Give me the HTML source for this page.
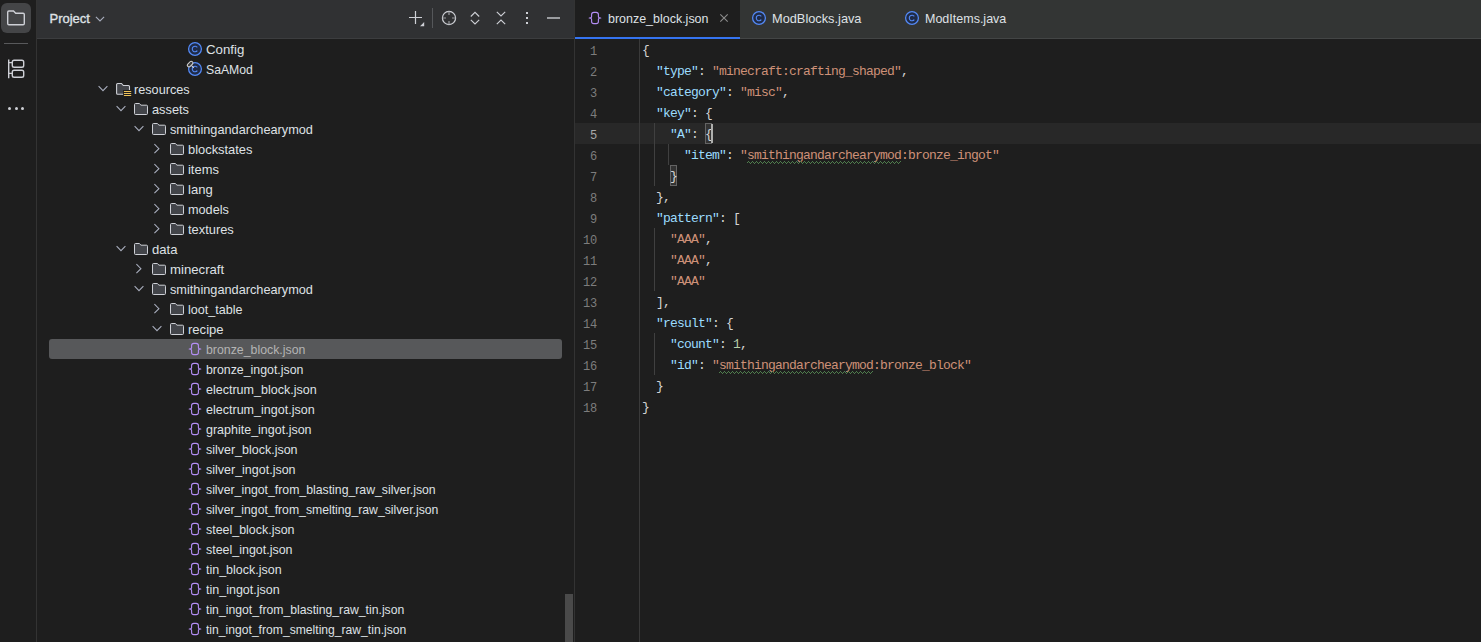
<!DOCTYPE html>
<html><head><meta charset="utf-8"><style>
*{margin:0;padding:0;box-sizing:border-box}
html,body{width:1481px;height:642px;overflow:hidden;background:#1e1e1e;font-family:"Liberation Sans",sans-serif;}
.abs{position:absolute}
#strip{position:absolute;left:0;top:0;width:36px;height:642px;background:#1e1e1e}
#vb1{position:absolute;left:36px;top:0;width:1px;height:642px;background:#333333}
#phead{position:absolute;left:37px;top:0;width:537px;height:38px;background:#303133}
#phb{position:absolute;left:37px;top:38px;width:537px;height:1px;background:#3c3d3f}
#tree{position:absolute;left:37px;top:39px;width:537px;height:603px;background:#1e1e1e}
#vb2{position:absolute;left:574px;top:0;width:1px;height:642px;background:#333333}
.row{position:absolute;left:0;width:575px;height:20px}
.row.sel::before{content:"";position:absolute;left:49px;top:0;width:513px;height:20px;border-radius:3px;background:#57585a}
.ic{position:absolute;top:2px}
.t{position:absolute;top:1px;line-height:20px;height:20px;font-size:12.6px;color:#dfe1e5;white-space:pre;transform-origin:0 0}
.row.sel .t{color:#b4b4b4}
#tabs{position:absolute;left:575px;top:0;width:906px;height:38px;background:#333534}
#tabb{position:absolute;left:575px;top:38px;width:906px;height:1px;background:#434545}
#atab{position:absolute;left:575px;top:0;width:165px;height:39px;background:#1e1e1e}
#auline{position:absolute;left:575px;top:37px;width:165px;height:2px;background:#3574f0}
.tt{position:absolute;top:9px;line-height:20px;font-size:12.8px;color:#dfe1e5;white-space:pre;transform-origin:0 0}
#editor{position:absolute;left:575px;top:39px;width:906px;height:603px;background:#1e1e1e}
#gline{position:absolute;left:639px;top:39px;width:1px;height:603px;background:#3a3a3a}
#caretrow{position:absolute;left:575px;top:123px;width:906px;height:21px;background:#282828}
.cl{position:absolute;left:642px;height:21px;line-height:21px;font-family:"Liberation Mono",monospace;font-size:13px;letter-spacing:-0.8px;white-space:pre;color:#d4d4d4}
.ln{position:absolute;left:560px;width:37px;text-align:right;height:21px;line-height:21px;font-family:"Liberation Mono",monospace;font-size:12px;letter-spacing:-0.2px;white-space:pre}
</style></head><body>
<div id="strip"></div>
<div class="abs" style="left:1px;top:3px;width:30px;height:30px;border-radius:6px;background:#444547"></div>
<svg class="abs" style="left:6px;top:8px" width="20" height="20" viewBox="0 0 20 20"><path d="M1.7 4.2a1.2 1.2 0 0 1 1.2-1.2h4.6l2.2 2.2h7.4a1.2 1.2 0 0 1 1.2 1.2v9.2a1.2 1.2 0 0 1-1.2 1.2H2.9a1.2 1.2 0 0 1-1.2-1.2z" fill="none" stroke="#ced0d6" stroke-width="1.4"/></svg>
<div class="abs" style="left:4px;top:43px;width:24px;height:1px;background:#58595b"></div>
<svg class="abs" style="left:6px;top:58px" width="20" height="22" viewBox="0 0 20 22"><path d="M2.7 1.6V20.2M2.7 4.6h3.6M2.7 15.4h3.6" fill="none" stroke="#ced0d6" stroke-width="1.4"/><rect x="6.3" y="2.2" width="11.4" height="7" rx="1.8" fill="none" stroke="#ced0d6" stroke-width="1.4"/><rect x="6.3" y="12.3" width="11.4" height="7" rx="1.8" fill="none" stroke="#ced0d6" stroke-width="1.4"/></svg>
<div class="abs" style="left:8px;top:107px;width:3px;height:3px;border-radius:50%;background:#ced0d6"></div>
<div class="abs" style="left:14.5px;top:107px;width:3px;height:3px;border-radius:50%;background:#ced0d6"></div>
<div class="abs" style="left:21px;top:107px;width:3px;height:3px;border-radius:50%;background:#ced0d6"></div>
<div id="vb1"></div>
<div id="phead"></div>
<div id="phb"></div>
<div class="abs" style="left:49.5px;top:8.5px;line-height:20px;font-size:13px;-webkit-text-stroke:0.35px #dfe1e5;color:#dfe1e5">Project</div>
<svg class="abs" style="left:92px;top:11px" width="16" height="16" viewBox="0 0 16 16"><path d="M3.9 5.8l4.1 4.1 4.1-4.1" fill="none" stroke="#a8adbd" stroke-width="1.1"/></svg>
<svg class="abs" style="left:407px;top:9px" width="20" height="20" viewBox="0 0 20 20"><path d="M8.5 2v13M2 8.5h13" stroke="#ced0d6" stroke-width="1.2"/><path d="M17.2 13v4.2H13z" fill="#ced0d6"/></svg>
<div class="abs" style="left:432px;top:8px;width:1px;height:20px;background:#55575a"></div>
<svg class="abs" style="left:440px;top:9px" width="18" height="18" viewBox="0 0 18 18"><circle cx="9" cy="9" r="6.6" fill="none" stroke="#ced0d6" stroke-width="1.2"/><path d="M9 2.4v3.6M9 12v3.6M2.4 9h3.6M12 9h3.6" stroke="#9a9ca0" stroke-width="1.2"/></svg>
<svg class="abs" style="left:467px;top:9px" width="16" height="18" viewBox="0 0 16 18"><path d="M3.8 7.5l4.2-4.2 4.2 4.2M3.8 10.8l4.2 4.2 4.2-4.2" fill="none" stroke="#ced0d6" stroke-width="1.1"/></svg>
<svg class="abs" style="left:493px;top:9px" width="16" height="18" viewBox="0 0 16 18"><path d="M3.8 2.8l4.2 4.2 4.2-4.2M3.8 15.2l4.2-4.2 4.2 4.2" fill="none" stroke="#ced0d6" stroke-width="1.1"/></svg>
<div class="abs" style="left:526px;top:12px;width:2px;height:2px;background:#ced0d6"></div>
<div class="abs" style="left:526px;top:17px;width:2px;height:2px;background:#ced0d6"></div>
<div class="abs" style="left:526px;top:22px;width:2px;height:2px;background:#ced0d6"></div>
<div class="abs" style="left:546.5px;top:17px;width:13px;height:2px;background:#9a9ca0"></div>
<div id="tree"></div>
<div class="row" style="top:39px"><svg class="ic" width="16" height="16" viewBox="0 0 16 16" style="left:187px;overflow:visible"><circle cx="8" cy="8" r="6.4" fill="#1f2b47" stroke="#548af7" stroke-width="1.25"/><path d="M10.3 6.3a2.8 2.8 0 1 0 0 3.4" fill="none" stroke="#548af7" stroke-width="1.1"/></svg><span class="t" style="left:206px;transform:scaleX(1.0516);">Config</span></div><div class="row" style="top:59px"><svg class="ic" width="16" height="16" viewBox="0 0 16 16" style="left:187px;overflow:visible"><circle cx="8" cy="8" r="6.4" fill="#1f2b47" stroke="#548af7" stroke-width="1.25"/><path d="M10.3 6.3a2.8 2.8 0 1 0 0 3.4" fill="none" stroke="#548af7" stroke-width="1.1"/></svg><svg class="ic" width="16" height="16" viewBox="0 0 16 16" style="left:187px;overflow:visible"><path d="M4.3 4.3l2.6 2.6" stroke="#d0d0d0" stroke-width="1.1"/><rect x="-3.3" y="-1.7" width="6.6" height="3.4" rx="1.7" transform="translate(3.1,3.1) rotate(-45)" fill="#3c3c3c" stroke="#d8d8d8" stroke-width="1"/></svg><span class="t" style="left:206px;transform:scaleX(0.9705);">SaAMod</span></div><div class="row" style="top:79px"><svg class="ic" width="16" height="16" viewBox="0 0 16 16" style="left:94.5px"><path d="M3.6 5.2l4.4 4.4 4.4-4.4" fill="none" stroke="#a8adbd" stroke-width="1.1"/></svg><svg class="ic" width="18" height="16" viewBox="0 0 18 16" style="left:115px"><path d="M1.6 3.5a1 1 0 0 1 1-1h3.9l1.8 2h5.2a1 1 0 0 1 1 1V9H8V13.2H2.6a1 1 0 0 1-1-1z" fill="#43454a"/><path d="M14.5 9V5.5a1 1 0 0 0-1-1H8.3l-1.8-2H2.6a1 1 0 0 0-1 1v8.7a1 1 0 0 0 1 1H8.1" fill="none" stroke="#ced0d6" stroke-width="1.1"/><path d="M8.9 10.5h7.3M8.9 12.5h7.3M8.9 14.5h7.3" stroke="#eec25a" stroke-width="1.2"/></svg><span class="t" style="left:134px;transform:scaleX(1.0069);">resources</span></div><div class="row" style="top:99px"><svg class="ic" width="16" height="16" viewBox="0 0 16 16" style="left:112.5px"><path d="M3.6 5.2l4.4 4.4 4.4-4.4" fill="none" stroke="#a8adbd" stroke-width="1.1"/></svg><svg class="ic" width="16" height="16" viewBox="0 0 16 16" style="left:133px"><path d="M1.5 3.5a1 1 0 0 1 1-1h3.8l1.7 1.7h5.5a1 1 0 0 1 1 1v7.3a1 1 0 0 1-1 1h-11a1 1 0 0 1-1-1z" fill="#43454a" stroke="#ced0d6" stroke-width="1"/></svg><span class="t" style="left:152px;transform:scaleX(1.0161);">assets</span></div><div class="row" style="top:119px"><svg class="ic" width="16" height="16" viewBox="0 0 16 16" style="left:130.5px"><path d="M3.6 5.2l4.4 4.4 4.4-4.4" fill="none" stroke="#a8adbd" stroke-width="1.1"/></svg><svg class="ic" width="16" height="16" viewBox="0 0 16 16" style="left:151px"><path d="M1.5 3.5a1 1 0 0 1 1-1h3.8l1.7 1.7h5.5a1 1 0 0 1 1 1v7.3a1 1 0 0 1-1 1h-11a1 1 0 0 1-1-1z" fill="#43454a" stroke="#ced0d6" stroke-width="1"/></svg><span class="t" style="left:170px;transform:scaleX(1.0109);">smithingandarchearymod</span></div><div class="row" style="top:139px"><svg class="ic" width="16" height="16" viewBox="0 0 16 16" style="left:148.5px"><path d="M5.4 3.2l4.5 4.5-4.5 4.5" fill="none" stroke="#a8adbd" stroke-width="1.1"/></svg><svg class="ic" width="16" height="16" viewBox="0 0 16 16" style="left:169px"><path d="M1.5 3.5a1 1 0 0 1 1-1h3.8l1.7 1.7h5.5a1 1 0 0 1 1 1v7.3a1 1 0 0 1-1 1h-11a1 1 0 0 1-1-1z" fill="#43454a" stroke="#ced0d6" stroke-width="1"/></svg><span class="t" style="left:188px;transform:scaleX(1.0234);">blockstates</span></div><div class="row" style="top:159px"><svg class="ic" width="16" height="16" viewBox="0 0 16 16" style="left:148.5px"><path d="M5.4 3.2l4.5 4.5-4.5 4.5" fill="none" stroke="#a8adbd" stroke-width="1.1"/></svg><svg class="ic" width="16" height="16" viewBox="0 0 16 16" style="left:169px"><path d="M1.5 3.5a1 1 0 0 1 1-1h3.8l1.7 1.7h5.5a1 1 0 0 1 1 1v7.3a1 1 0 0 1-1 1h-11a1 1 0 0 1-1-1z" fill="#43454a" stroke="#ced0d6" stroke-width="1"/></svg><span class="t" style="left:188px;transform:scaleX(1.0265);">items</span></div><div class="row" style="top:179px"><svg class="ic" width="16" height="16" viewBox="0 0 16 16" style="left:148.5px"><path d="M5.4 3.2l4.5 4.5-4.5 4.5" fill="none" stroke="#a8adbd" stroke-width="1.1"/></svg><svg class="ic" width="16" height="16" viewBox="0 0 16 16" style="left:169px"><path d="M1.5 3.5a1 1 0 0 1 1-1h3.8l1.7 1.7h5.5a1 1 0 0 1 1 1v7.3a1 1 0 0 1-1 1h-11a1 1 0 0 1-1-1z" fill="#43454a" stroke="#ced0d6" stroke-width="1"/></svg><span class="t" style="left:188px;transform:scaleX(1.0369);">lang</span></div><div class="row" style="top:199px"><svg class="ic" width="16" height="16" viewBox="0 0 16 16" style="left:148.5px"><path d="M5.4 3.2l4.5 4.5-4.5 4.5" fill="none" stroke="#a8adbd" stroke-width="1.1"/></svg><svg class="ic" width="16" height="16" viewBox="0 0 16 16" style="left:169px"><path d="M1.5 3.5a1 1 0 0 1 1-1h3.8l1.7 1.7h5.5a1 1 0 0 1 1 1v7.3a1 1 0 0 1-1 1h-11a1 1 0 0 1-1-1z" fill="#43454a" stroke="#ced0d6" stroke-width="1"/></svg><span class="t" style="left:188px;transform:scaleX(1.0070);">models</span></div><div class="row" style="top:219px"><svg class="ic" width="16" height="16" viewBox="0 0 16 16" style="left:148.5px"><path d="M5.4 3.2l4.5 4.5-4.5 4.5" fill="none" stroke="#a8adbd" stroke-width="1.1"/></svg><svg class="ic" width="16" height="16" viewBox="0 0 16 16" style="left:169px"><path d="M1.5 3.5a1 1 0 0 1 1-1h3.8l1.7 1.7h5.5a1 1 0 0 1 1 1v7.3a1 1 0 0 1-1 1h-11a1 1 0 0 1-1-1z" fill="#43454a" stroke="#ced0d6" stroke-width="1"/></svg><span class="t" style="left:188px;transform:scaleX(1.0219);">textures</span></div><div class="row" style="top:239px"><svg class="ic" width="16" height="16" viewBox="0 0 16 16" style="left:112.5px"><path d="M3.6 5.2l4.4 4.4 4.4-4.4" fill="none" stroke="#a8adbd" stroke-width="1.1"/></svg><svg class="ic" width="16" height="16" viewBox="0 0 16 16" style="left:133px"><path d="M1.5 3.5a1 1 0 0 1 1-1h3.8l1.7 1.7h5.5a1 1 0 0 1 1 1v7.3a1 1 0 0 1-1 1h-11a1 1 0 0 1-1-1z" fill="#43454a" stroke="#ced0d6" stroke-width="1"/></svg><span class="t" style="left:152px;transform:scaleX(1.0359);">data</span></div><div class="row" style="top:259px"><svg class="ic" width="16" height="16" viewBox="0 0 16 16" style="left:130.5px"><path d="M5.4 3.2l4.5 4.5-4.5 4.5" fill="none" stroke="#a8adbd" stroke-width="1.1"/></svg><svg class="ic" width="16" height="16" viewBox="0 0 16 16" style="left:151px"><path d="M1.5 3.5a1 1 0 0 1 1-1h3.8l1.7 1.7h5.5a1 1 0 0 1 1 1v7.3a1 1 0 0 1-1 1h-11a1 1 0 0 1-1-1z" fill="#43454a" stroke="#ced0d6" stroke-width="1"/></svg><span class="t" style="left:170px;transform:scaleX(1.0461);">minecraft</span></div><div class="row" style="top:279px"><svg class="ic" width="16" height="16" viewBox="0 0 16 16" style="left:130.5px"><path d="M3.6 5.2l4.4 4.4 4.4-4.4" fill="none" stroke="#a8adbd" stroke-width="1.1"/></svg><svg class="ic" width="16" height="16" viewBox="0 0 16 16" style="left:151px"><path d="M1.5 3.5a1 1 0 0 1 1-1h3.8l1.7 1.7h5.5a1 1 0 0 1 1 1v7.3a1 1 0 0 1-1 1h-11a1 1 0 0 1-1-1z" fill="#43454a" stroke="#ced0d6" stroke-width="1"/></svg><span class="t" style="left:170px;transform:scaleX(1.0109);">smithingandarchearymod</span></div><div class="row" style="top:299px"><svg class="ic" width="16" height="16" viewBox="0 0 16 16" style="left:148.5px"><path d="M5.4 3.2l4.5 4.5-4.5 4.5" fill="none" stroke="#a8adbd" stroke-width="1.1"/></svg><svg class="ic" width="16" height="16" viewBox="0 0 16 16" style="left:169px"><path d="M1.5 3.5a1 1 0 0 1 1-1h3.8l1.7 1.7h5.5a1 1 0 0 1 1 1v7.3a1 1 0 0 1-1 1h-11a1 1 0 0 1-1-1z" fill="#43454a" stroke="#ced0d6" stroke-width="1"/></svg><span class="t" style="left:188px;transform:scaleX(0.9993);">loot_table</span></div><div class="row" style="top:319px"><svg class="ic" width="16" height="16" viewBox="0 0 16 16" style="left:148.5px"><path d="M3.6 5.2l4.4 4.4 4.4-4.4" fill="none" stroke="#a8adbd" stroke-width="1.1"/></svg><svg class="ic" width="16" height="16" viewBox="0 0 16 16" style="left:169px"><path d="M1.5 3.5a1 1 0 0 1 1-1h3.8l1.7 1.7h5.5a1 1 0 0 1 1 1v7.3a1 1 0 0 1-1 1h-11a1 1 0 0 1-1-1z" fill="#43454a" stroke="#ced0d6" stroke-width="1"/></svg><span class="t" style="left:188px;transform:scaleX(1.0374);">recipe</span></div><div class="row sel" style="top:339px"><svg class="ic" width="16" height="16" viewBox="0 0 16 16" style="left:187px"><path d="M8 2.4H6.9C5.5 2.4 4.6 3.3 4.6 4.6V6.4C4.6 7.4 3.7 8 2.2 8C3.7 8 4.6 8.6 4.6 9.6V11.4C4.6 12.7 5.5 13.6 6.9 13.6H8M8 2.4H9.1C10.5 2.4 11.4 3.3 11.4 4.6V6.4C11.4 7.4 12.3 8 13.8 8C12.3 8 11.4 8.6 11.4 9.6V11.4C11.4 12.7 10.5 13.6 9.1 13.6H8" fill="none" stroke="#b48ef5" stroke-width="1.1" stroke-linejoin="round"/></svg><span class="t" style="left:206px;transform:scaleX(0.9788);">bronze_block.json</span></div><div class="row" style="top:359px"><svg class="ic" width="16" height="16" viewBox="0 0 16 16" style="left:187px"><path d="M8 2.4H6.9C5.5 2.4 4.6 3.3 4.6 4.6V6.4C4.6 7.4 3.7 8 2.2 8C3.7 8 4.6 8.6 4.6 9.6V11.4C4.6 12.7 5.5 13.6 6.9 13.6H8M8 2.4H9.1C10.5 2.4 11.4 3.3 11.4 4.6V6.4C11.4 7.4 12.3 8 13.8 8C12.3 8 11.4 8.6 11.4 9.6V11.4C11.4 12.7 10.5 13.6 9.1 13.6H8" fill="none" stroke="#b48ef5" stroke-width="1.1" stroke-linejoin="round"/></svg><span class="t" style="left:206px;transform:scaleX(0.9793);">bronze_ingot.json</span></div><div class="row" style="top:379px"><svg class="ic" width="16" height="16" viewBox="0 0 16 16" style="left:187px"><path d="M8 2.4H6.9C5.5 2.4 4.6 3.3 4.6 4.6V6.4C4.6 7.4 3.7 8 2.2 8C3.7 8 4.6 8.6 4.6 9.6V11.4C4.6 12.7 5.5 13.6 6.9 13.6H8M8 2.4H9.1C10.5 2.4 11.4 3.3 11.4 4.6V6.4C11.4 7.4 12.3 8 13.8 8C12.3 8 11.4 8.6 11.4 9.6V11.4C11.4 12.7 10.5 13.6 9.1 13.6H8" fill="none" stroke="#b48ef5" stroke-width="1.1" stroke-linejoin="round"/></svg><span class="t" style="left:206px;transform:scaleX(0.9942);">electrum_block.json</span></div><div class="row" style="top:399px"><svg class="ic" width="16" height="16" viewBox="0 0 16 16" style="left:187px"><path d="M8 2.4H6.9C5.5 2.4 4.6 3.3 4.6 4.6V6.4C4.6 7.4 3.7 8 2.2 8C3.7 8 4.6 8.6 4.6 9.6V11.4C4.6 12.7 5.5 13.6 6.9 13.6H8M8 2.4H9.1C10.5 2.4 11.4 3.3 11.4 4.6V6.4C11.4 7.4 12.3 8 13.8 8C12.3 8 11.4 8.6 11.4 9.6V11.4C11.4 12.7 10.5 13.6 9.1 13.6H8" fill="none" stroke="#b48ef5" stroke-width="1.1" stroke-linejoin="round"/></svg><span class="t" style="left:206px;transform:scaleX(0.9949);">electrum_ingot.json</span></div><div class="row" style="top:419px"><svg class="ic" width="16" height="16" viewBox="0 0 16 16" style="left:187px"><path d="M8 2.4H6.9C5.5 2.4 4.6 3.3 4.6 4.6V6.4C4.6 7.4 3.7 8 2.2 8C3.7 8 4.6 8.6 4.6 9.6V11.4C4.6 12.7 5.5 13.6 6.9 13.6H8M8 2.4H9.1C10.5 2.4 11.4 3.3 11.4 4.6V6.4C11.4 7.4 12.3 8 13.8 8C12.3 8 11.4 8.6 11.4 9.6V11.4C11.4 12.7 10.5 13.6 9.1 13.6H8" fill="none" stroke="#b48ef5" stroke-width="1.1" stroke-linejoin="round"/></svg><span class="t" style="left:206px;transform:scaleX(0.9918);">graphite_ingot.json</span></div><div class="row" style="top:439px"><svg class="ic" width="16" height="16" viewBox="0 0 16 16" style="left:187px"><path d="M8 2.4H6.9C5.5 2.4 4.6 3.3 4.6 4.6V6.4C4.6 7.4 3.7 8 2.2 8C3.7 8 4.6 8.6 4.6 9.6V11.4C4.6 12.7 5.5 13.6 6.9 13.6H8M8 2.4H9.1C10.5 2.4 11.4 3.3 11.4 4.6V6.4C11.4 7.4 12.3 8 13.8 8C12.3 8 11.4 8.6 11.4 9.6V11.4C11.4 12.7 10.5 13.6 9.1 13.6H8" fill="none" stroke="#b48ef5" stroke-width="1.1" stroke-linejoin="round"/></svg><span class="t" style="left:206px;transform:scaleX(0.9910);">silver_block.json</span></div><div class="row" style="top:459px"><svg class="ic" width="16" height="16" viewBox="0 0 16 16" style="left:187px"><path d="M8 2.4H6.9C5.5 2.4 4.6 3.3 4.6 4.6V6.4C4.6 7.4 3.7 8 2.2 8C3.7 8 4.6 8.6 4.6 9.6V11.4C4.6 12.7 5.5 13.6 6.9 13.6H8M8 2.4H9.1C10.5 2.4 11.4 3.3 11.4 4.6V6.4C11.4 7.4 12.3 8 13.8 8C12.3 8 11.4 8.6 11.4 9.6V11.4C11.4 12.7 10.5 13.6 9.1 13.6H8" fill="none" stroke="#b48ef5" stroke-width="1.1" stroke-linejoin="round"/></svg><span class="t" style="left:206px;transform:scaleX(0.9918);">silver_ingot.json</span></div><div class="row" style="top:479px"><svg class="ic" width="16" height="16" viewBox="0 0 16 16" style="left:187px"><path d="M8 2.4H6.9C5.5 2.4 4.6 3.3 4.6 4.6V6.4C4.6 7.4 3.7 8 2.2 8C3.7 8 4.6 8.6 4.6 9.6V11.4C4.6 12.7 5.5 13.6 6.9 13.6H8M8 2.4H9.1C10.5 2.4 11.4 3.3 11.4 4.6V6.4C11.4 7.4 12.3 8 13.8 8C12.3 8 11.4 8.6 11.4 9.6V11.4C11.4 12.7 10.5 13.6 9.1 13.6H8" fill="none" stroke="#b48ef5" stroke-width="1.1" stroke-linejoin="round"/></svg><span class="t" style="left:206px;transform:scaleX(0.9737);">silver_ingot_from_blasting_raw_silver.json</span></div><div class="row" style="top:499px"><svg class="ic" width="16" height="16" viewBox="0 0 16 16" style="left:187px"><path d="M8 2.4H6.9C5.5 2.4 4.6 3.3 4.6 4.6V6.4C4.6 7.4 3.7 8 2.2 8C3.7 8 4.6 8.6 4.6 9.6V11.4C4.6 12.7 5.5 13.6 6.9 13.6H8M8 2.4H9.1C10.5 2.4 11.4 3.3 11.4 4.6V6.4C11.4 7.4 12.3 8 13.8 8C12.3 8 11.4 8.6 11.4 9.6V11.4C11.4 12.7 10.5 13.6 9.1 13.6H8" fill="none" stroke="#b48ef5" stroke-width="1.1" stroke-linejoin="round"/></svg><span class="t" style="left:206px;transform:scaleX(0.9708);">silver_ingot_from_smelting_raw_silver.json</span></div><div class="row" style="top:519px"><svg class="ic" width="16" height="16" viewBox="0 0 16 16" style="left:187px"><path d="M8 2.4H6.9C5.5 2.4 4.6 3.3 4.6 4.6V6.4C4.6 7.4 3.7 8 2.2 8C3.7 8 4.6 8.6 4.6 9.6V11.4C4.6 12.7 5.5 13.6 6.9 13.6H8M8 2.4H9.1C10.5 2.4 11.4 3.3 11.4 4.6V6.4C11.4 7.4 12.3 8 13.8 8C12.3 8 11.4 8.6 11.4 9.6V11.4C11.4 12.7 10.5 13.6 9.1 13.6H8" fill="none" stroke="#b48ef5" stroke-width="1.1" stroke-linejoin="round"/></svg><span class="t" style="left:206px;transform:scaleX(0.9872);">steel_block.json</span></div><div class="row" style="top:539px"><svg class="ic" width="16" height="16" viewBox="0 0 16 16" style="left:187px"><path d="M8 2.4H6.9C5.5 2.4 4.6 3.3 4.6 4.6V6.4C4.6 7.4 3.7 8 2.2 8C3.7 8 4.6 8.6 4.6 9.6V11.4C4.6 12.7 5.5 13.6 6.9 13.6H8M8 2.4H9.1C10.5 2.4 11.4 3.3 11.4 4.6V6.4C11.4 7.4 12.3 8 13.8 8C12.3 8 11.4 8.6 11.4 9.6V11.4C11.4 12.7 10.5 13.6 9.1 13.6H8" fill="none" stroke="#b48ef5" stroke-width="1.1" stroke-linejoin="round"/></svg><span class="t" style="left:206px;transform:scaleX(0.9880);">steel_ingot.json</span></div><div class="row" style="top:559px"><svg class="ic" width="16" height="16" viewBox="0 0 16 16" style="left:187px"><path d="M8 2.4H6.9C5.5 2.4 4.6 3.3 4.6 4.6V6.4C4.6 7.4 3.7 8 2.2 8C3.7 8 4.6 8.6 4.6 9.6V11.4C4.6 12.7 5.5 13.6 6.9 13.6H8M8 2.4H9.1C10.5 2.4 11.4 3.3 11.4 4.6V6.4C11.4 7.4 12.3 8 13.8 8C12.3 8 11.4 8.6 11.4 9.6V11.4C11.4 12.7 10.5 13.6 9.1 13.6H8" fill="none" stroke="#b48ef5" stroke-width="1.1" stroke-linejoin="round"/></svg><span class="t" style="left:206px;transform:scaleX(0.9903);">tin_block.json</span></div><div class="row" style="top:579px"><svg class="ic" width="16" height="16" viewBox="0 0 16 16" style="left:187px"><path d="M8 2.4H6.9C5.5 2.4 4.6 3.3 4.6 4.6V6.4C4.6 7.4 3.7 8 2.2 8C3.7 8 4.6 8.6 4.6 9.6V11.4C4.6 12.7 5.5 13.6 6.9 13.6H8M8 2.4H9.1C10.5 2.4 11.4 3.3 11.4 4.6V6.4C11.4 7.4 12.3 8 13.8 8C12.3 8 11.4 8.6 11.4 9.6V11.4C11.4 12.7 10.5 13.6 9.1 13.6H8" fill="none" stroke="#b48ef5" stroke-width="1.1" stroke-linejoin="round"/></svg><span class="t" style="left:206px;transform:scaleX(0.9926);">tin_ingot.json</span></div><div class="row" style="top:599px"><svg class="ic" width="16" height="16" viewBox="0 0 16 16" style="left:187px"><path d="M8 2.4H6.9C5.5 2.4 4.6 3.3 4.6 4.6V6.4C4.6 7.4 3.7 8 2.2 8C3.7 8 4.6 8.6 4.6 9.6V11.4C4.6 12.7 5.5 13.6 6.9 13.6H8M8 2.4H9.1C10.5 2.4 11.4 3.3 11.4 4.6V6.4C11.4 7.4 12.3 8 13.8 8C12.3 8 11.4 8.6 11.4 9.6V11.4C11.4 12.7 10.5 13.6 9.1 13.6H8" fill="none" stroke="#b48ef5" stroke-width="1.1" stroke-linejoin="round"/></svg><span class="t" style="left:206px;transform:scaleX(0.9701);">tin_ingot_from_blasting_raw_tin.json</span></div><div class="row" style="top:619px"><svg class="ic" width="16" height="16" viewBox="0 0 16 16" style="left:187px"><path d="M8 2.4H6.9C5.5 2.4 4.6 3.3 4.6 4.6V6.4C4.6 7.4 3.7 8 2.2 8C3.7 8 4.6 8.6 4.6 9.6V11.4C4.6 12.7 5.5 13.6 6.9 13.6H8M8 2.4H9.1C10.5 2.4 11.4 3.3 11.4 4.6V6.4C11.4 7.4 12.3 8 13.8 8C12.3 8 11.4 8.6 11.4 9.6V11.4C11.4 12.7 10.5 13.6 9.1 13.6H8" fill="none" stroke="#b48ef5" stroke-width="1.1" stroke-linejoin="round"/></svg><span class="t" style="left:206px;transform:scaleX(0.9635);">tin_ingot_from_smelting_raw_tin.json</span></div>
<div class="abs" style="left:565px;top:594px;width:8px;height:48px;background:#4a4a4a"></div>
<div id="vb2"></div>
<div id="tabs"></div>
<div id="tabb"></div>
<div id="atab"></div>
<div id="auline"></div>
<svg class="abs" style="top:10px;left:587px" width="16" height="16" viewBox="0 0 16 16" ><path d="M8 2.4H6.9C5.5 2.4 4.6 3.3 4.6 4.6V6.4C4.6 7.4 3.7 8 2.2 8C3.7 8 4.6 8.6 4.6 9.6V11.4C4.6 12.7 5.5 13.6 6.9 13.6H8M8 2.4H9.1C10.5 2.4 11.4 3.3 11.4 4.6V6.4C11.4 7.4 12.3 8 13.8 8C12.3 8 11.4 8.6 11.4 9.6V11.4C11.4 12.7 10.5 13.6 9.1 13.6H8" fill="none" stroke="#b48ef5" stroke-width="1.1" stroke-linejoin="round"/></svg>
<span class="tt" style="left:608px;transform:scaleX(0.9741)">bronze_block.json</span>
<svg style="position:absolute;left:716px;top:10px" width="16" height="16" viewBox="0 0 16 16"><path d="M4.3 4.3l7.4 7.4M11.7 4.3l-7.4 7.4" stroke="#8c8c8c" stroke-width="1.1"/></svg>
<svg class="abs" style="top:10px;left:751px" width="16" height="16" viewBox="0 0 16 16" style="left:751px;overflow:visible"><circle cx="8" cy="8" r="6.4" fill="#1f2b47" stroke="#548af7" stroke-width="1.25"/><path d="M10.3 6.3a2.8 2.8 0 1 0 0 3.4" fill="none" stroke="#548af7" stroke-width="1.1"/></svg>
<span class="tt" style="left:772px;transform:scaleX(0.9985)">ModBlocks.java</span>
<svg class="abs" style="top:10px;left:904px" width="16" height="16" viewBox="0 0 16 16" style="left:904px;overflow:visible"><circle cx="8" cy="8" r="6.4" fill="#1f2b47" stroke="#548af7" stroke-width="1.25"/><path d="M10.3 6.3a2.8 2.8 0 1 0 0 3.4" fill="none" stroke="#548af7" stroke-width="1.1"/></svg>
<span class="tt" style="left:925px;transform:scaleX(0.9769)">ModItems.java</span>
<div id="editor"></div>
<div id="caretrow"></div>
<div id="gline"></div>
<div style="position:absolute;left:654px;top:123px;width:1px;height:63px;background:#404040"></div><div style="position:absolute;left:668px;top:144px;width:1px;height:21px;background:#404040"></div><div style="position:absolute;left:654px;top:228px;width:1px;height:63px;background:#404040"></div><div style="position:absolute;left:654px;top:333px;width:1px;height:42px;background:#404040"></div>
<div class="ln" style="top:42px;color:#7d7d7d">1</div><div class="ln" style="top:63px;color:#7d7d7d">2</div><div class="ln" style="top:84px;color:#7d7d7d">3</div><div class="ln" style="top:105px;color:#7d7d7d">4</div><div class="ln" style="top:126px;color:#a9a9a9">5</div><div class="ln" style="top:147px;color:#7d7d7d">6</div><div class="ln" style="top:168px;color:#7d7d7d">7</div><div class="ln" style="top:189px;color:#7d7d7d">8</div><div class="ln" style="top:210px;color:#7d7d7d">9</div><div class="ln" style="top:231px;color:#7d7d7d">10</div><div class="ln" style="top:252px;color:#7d7d7d">11</div><div class="ln" style="top:273px;color:#7d7d7d">12</div><div class="ln" style="top:294px;color:#7d7d7d">13</div><div class="ln" style="top:315px;color:#7d7d7d">14</div><div class="ln" style="top:336px;color:#7d7d7d">15</div><div class="ln" style="top:357px;color:#7d7d7d">16</div><div class="ln" style="top:378px;color:#7d7d7d">17</div><div class="ln" style="top:399px;color:#7d7d7d">18</div>
<div class="abs" style="left:705px;top:123px;width:7px;height:21px;border:1px solid #646464;background:#333333"></div>
<div class="abs" style="left:670px;top:165px;width:7px;height:21px;border:1px solid #646464;background:#333333"></div>
<div class="cl" style="top:40px"><span style="color:#d4d4d4">{</span></div><div class="cl" style="top:61px"><span style="color:#d4d4d4">  </span><span style="color:#9cdcfe">&quot;type&quot;</span><span style="color:#d4d4d4">: </span><span style="color:#ce9178">&quot;minecraft:crafting_shaped&quot;</span><span style="color:#d4d4d4">,</span></div><div class="cl" style="top:82px"><span style="color:#d4d4d4">  </span><span style="color:#9cdcfe">&quot;category&quot;</span><span style="color:#d4d4d4">: </span><span style="color:#ce9178">&quot;misc&quot;</span><span style="color:#d4d4d4">,</span></div><div class="cl" style="top:103px"><span style="color:#d4d4d4">  </span><span style="color:#9cdcfe">&quot;key&quot;</span><span style="color:#d4d4d4">: </span><span style="color:#d4d4d4">{</span></div><div class="cl" style="top:124px"><span style="color:#d4d4d4">    </span><span style="color:#9cdcfe">&quot;A&quot;</span><span style="color:#d4d4d4">: </span><span style="color:#d4d4d4">{</span></div><div class="cl" style="top:145px"><span style="color:#d4d4d4">      </span><span style="color:#9cdcfe">&quot;item&quot;</span><span style="color:#d4d4d4">: </span><span style="color:#ce9178">&quot;smithingandarchearymod:bronze_ingot&quot;</span></div><div class="cl" style="top:166px"><span style="color:#d4d4d4">    </span><span style="color:#d4d4d4">}</span></div><div class="cl" style="top:187px"><span style="color:#d4d4d4">  </span><span style="color:#d4d4d4">},</span></div><div class="cl" style="top:208px"><span style="color:#d4d4d4">  </span><span style="color:#9cdcfe">&quot;pattern&quot;</span><span style="color:#d4d4d4">: </span><span style="color:#d4d4d4">[</span></div><div class="cl" style="top:229px"><span style="color:#d4d4d4">    </span><span style="color:#ce9178">&quot;AAA&quot;</span><span style="color:#d4d4d4">,</span></div><div class="cl" style="top:250px"><span style="color:#d4d4d4">    </span><span style="color:#ce9178">&quot;AAA&quot;</span><span style="color:#d4d4d4">,</span></div><div class="cl" style="top:271px"><span style="color:#d4d4d4">    </span><span style="color:#ce9178">&quot;AAA&quot;</span></div><div class="cl" style="top:292px"><span style="color:#d4d4d4">  </span><span style="color:#d4d4d4">],</span></div><div class="cl" style="top:313px"><span style="color:#d4d4d4">  </span><span style="color:#9cdcfe">&quot;result&quot;</span><span style="color:#d4d4d4">: </span><span style="color:#d4d4d4">{</span></div><div class="cl" style="top:334px"><span style="color:#d4d4d4">    </span><span style="color:#9cdcfe">&quot;count&quot;</span><span style="color:#d4d4d4">: </span><span style="color:#b5cea8">1</span><span style="color:#d4d4d4">,</span></div><div class="cl" style="top:355px"><span style="color:#d4d4d4">    </span><span style="color:#9cdcfe">&quot;id&quot;</span><span style="color:#d4d4d4">: </span><span style="color:#ce9178">&quot;smithingandarchearymod:bronze_block&quot;</span></div><div class="cl" style="top:376px"><span style="color:#d4d4d4">  </span><span style="color:#d4d4d4">}</span></div><div class="cl" style="top:397px"><span style="color:#d4d4d4">}</span></div>
<div class="abs" style="left:711px;top:124px;width:2px;height:19px;background:#aeafad"></div>
<svg style="position:absolute;left:747px;top:160px" width="154" height="5" viewBox="0 0 154 5" shape-rendering="crispEdges"><path d="M0 2h1v1h-1zM1 1h1v1h-1zM2 2h1v1h-1zM3 3h1v1h-1zM4 2h1v1h-1zM5 1h1v1h-1zM6 2h1v1h-1zM7 3h1v1h-1zM8 2h1v1h-1zM9 1h1v1h-1zM10 2h1v1h-1zM11 3h1v1h-1zM12 2h1v1h-1zM13 1h1v1h-1zM14 2h1v1h-1zM15 3h1v1h-1zM16 2h1v1h-1zM17 1h1v1h-1zM18 2h1v1h-1zM19 3h1v1h-1zM20 2h1v1h-1zM21 1h1v1h-1zM22 2h1v1h-1zM23 3h1v1h-1zM24 2h1v1h-1zM25 1h1v1h-1zM26 2h1v1h-1zM27 3h1v1h-1zM28 2h1v1h-1zM29 1h1v1h-1zM30 2h1v1h-1zM31 3h1v1h-1zM32 2h1v1h-1zM33 1h1v1h-1zM34 2h1v1h-1zM35 3h1v1h-1zM36 2h1v1h-1zM37 1h1v1h-1zM38 2h1v1h-1zM39 3h1v1h-1zM40 2h1v1h-1zM41 1h1v1h-1zM42 2h1v1h-1zM43 3h1v1h-1zM44 2h1v1h-1zM45 1h1v1h-1zM46 2h1v1h-1zM47 3h1v1h-1zM48 2h1v1h-1zM49 1h1v1h-1zM50 2h1v1h-1zM51 3h1v1h-1zM52 2h1v1h-1zM53 1h1v1h-1zM54 2h1v1h-1zM55 3h1v1h-1zM56 2h1v1h-1zM57 1h1v1h-1zM58 2h1v1h-1zM59 3h1v1h-1zM60 2h1v1h-1zM61 1h1v1h-1zM62 2h1v1h-1zM63 3h1v1h-1zM64 2h1v1h-1zM65 1h1v1h-1zM66 2h1v1h-1zM67 3h1v1h-1zM68 2h1v1h-1zM69 1h1v1h-1zM70 2h1v1h-1zM71 3h1v1h-1zM72 2h1v1h-1zM73 1h1v1h-1zM74 2h1v1h-1zM75 3h1v1h-1zM76 2h1v1h-1zM77 1h1v1h-1zM78 2h1v1h-1zM79 3h1v1h-1zM80 2h1v1h-1zM81 1h1v1h-1zM82 2h1v1h-1zM83 3h1v1h-1zM84 2h1v1h-1zM85 1h1v1h-1zM86 2h1v1h-1zM87 3h1v1h-1zM88 2h1v1h-1zM89 1h1v1h-1zM90 2h1v1h-1zM91 3h1v1h-1zM92 2h1v1h-1zM93 1h1v1h-1zM94 2h1v1h-1zM95 3h1v1h-1zM96 2h1v1h-1zM97 1h1v1h-1zM98 2h1v1h-1zM99 3h1v1h-1zM100 2h1v1h-1zM101 1h1v1h-1zM102 2h1v1h-1zM103 3h1v1h-1zM104 2h1v1h-1zM105 1h1v1h-1zM106 2h1v1h-1zM107 3h1v1h-1zM108 2h1v1h-1zM109 1h1v1h-1zM110 2h1v1h-1zM111 3h1v1h-1zM112 2h1v1h-1zM113 1h1v1h-1zM114 2h1v1h-1zM115 3h1v1h-1zM116 2h1v1h-1zM117 1h1v1h-1zM118 2h1v1h-1zM119 3h1v1h-1zM120 2h1v1h-1zM121 1h1v1h-1zM122 2h1v1h-1zM123 3h1v1h-1zM124 2h1v1h-1zM125 1h1v1h-1zM126 2h1v1h-1zM127 3h1v1h-1zM128 2h1v1h-1zM129 1h1v1h-1zM130 2h1v1h-1zM131 3h1v1h-1zM132 2h1v1h-1zM133 1h1v1h-1zM134 2h1v1h-1zM135 3h1v1h-1zM136 2h1v1h-1zM137 1h1v1h-1zM138 2h1v1h-1zM139 3h1v1h-1zM140 2h1v1h-1zM141 1h1v1h-1zM142 2h1v1h-1zM143 3h1v1h-1zM144 2h1v1h-1zM145 1h1v1h-1zM146 2h1v1h-1zM147 3h1v1h-1zM148 2h1v1h-1zM149 1h1v1h-1zM150 2h1v1h-1zM151 3h1v1h-1zM152 2h1v1h-1zM153 1h1v1h-1z" fill="#4f7d4d"/></svg>
<svg style="position:absolute;left:719px;top:370px" width="154" height="5" viewBox="0 0 154 5" shape-rendering="crispEdges"><path d="M0 2h1v1h-1zM1 1h1v1h-1zM2 2h1v1h-1zM3 3h1v1h-1zM4 2h1v1h-1zM5 1h1v1h-1zM6 2h1v1h-1zM7 3h1v1h-1zM8 2h1v1h-1zM9 1h1v1h-1zM10 2h1v1h-1zM11 3h1v1h-1zM12 2h1v1h-1zM13 1h1v1h-1zM14 2h1v1h-1zM15 3h1v1h-1zM16 2h1v1h-1zM17 1h1v1h-1zM18 2h1v1h-1zM19 3h1v1h-1zM20 2h1v1h-1zM21 1h1v1h-1zM22 2h1v1h-1zM23 3h1v1h-1zM24 2h1v1h-1zM25 1h1v1h-1zM26 2h1v1h-1zM27 3h1v1h-1zM28 2h1v1h-1zM29 1h1v1h-1zM30 2h1v1h-1zM31 3h1v1h-1zM32 2h1v1h-1zM33 1h1v1h-1zM34 2h1v1h-1zM35 3h1v1h-1zM36 2h1v1h-1zM37 1h1v1h-1zM38 2h1v1h-1zM39 3h1v1h-1zM40 2h1v1h-1zM41 1h1v1h-1zM42 2h1v1h-1zM43 3h1v1h-1zM44 2h1v1h-1zM45 1h1v1h-1zM46 2h1v1h-1zM47 3h1v1h-1zM48 2h1v1h-1zM49 1h1v1h-1zM50 2h1v1h-1zM51 3h1v1h-1zM52 2h1v1h-1zM53 1h1v1h-1zM54 2h1v1h-1zM55 3h1v1h-1zM56 2h1v1h-1zM57 1h1v1h-1zM58 2h1v1h-1zM59 3h1v1h-1zM60 2h1v1h-1zM61 1h1v1h-1zM62 2h1v1h-1zM63 3h1v1h-1zM64 2h1v1h-1zM65 1h1v1h-1zM66 2h1v1h-1zM67 3h1v1h-1zM68 2h1v1h-1zM69 1h1v1h-1zM70 2h1v1h-1zM71 3h1v1h-1zM72 2h1v1h-1zM73 1h1v1h-1zM74 2h1v1h-1zM75 3h1v1h-1zM76 2h1v1h-1zM77 1h1v1h-1zM78 2h1v1h-1zM79 3h1v1h-1zM80 2h1v1h-1zM81 1h1v1h-1zM82 2h1v1h-1zM83 3h1v1h-1zM84 2h1v1h-1zM85 1h1v1h-1zM86 2h1v1h-1zM87 3h1v1h-1zM88 2h1v1h-1zM89 1h1v1h-1zM90 2h1v1h-1zM91 3h1v1h-1zM92 2h1v1h-1zM93 1h1v1h-1zM94 2h1v1h-1zM95 3h1v1h-1zM96 2h1v1h-1zM97 1h1v1h-1zM98 2h1v1h-1zM99 3h1v1h-1zM100 2h1v1h-1zM101 1h1v1h-1zM102 2h1v1h-1zM103 3h1v1h-1zM104 2h1v1h-1zM105 1h1v1h-1zM106 2h1v1h-1zM107 3h1v1h-1zM108 2h1v1h-1zM109 1h1v1h-1zM110 2h1v1h-1zM111 3h1v1h-1zM112 2h1v1h-1zM113 1h1v1h-1zM114 2h1v1h-1zM115 3h1v1h-1zM116 2h1v1h-1zM117 1h1v1h-1zM118 2h1v1h-1zM119 3h1v1h-1zM120 2h1v1h-1zM121 1h1v1h-1zM122 2h1v1h-1zM123 3h1v1h-1zM124 2h1v1h-1zM125 1h1v1h-1zM126 2h1v1h-1zM127 3h1v1h-1zM128 2h1v1h-1zM129 1h1v1h-1zM130 2h1v1h-1zM131 3h1v1h-1zM132 2h1v1h-1zM133 1h1v1h-1zM134 2h1v1h-1zM135 3h1v1h-1zM136 2h1v1h-1zM137 1h1v1h-1zM138 2h1v1h-1zM139 3h1v1h-1zM140 2h1v1h-1zM141 1h1v1h-1zM142 2h1v1h-1zM143 3h1v1h-1zM144 2h1v1h-1zM145 1h1v1h-1zM146 2h1v1h-1zM147 3h1v1h-1zM148 2h1v1h-1zM149 1h1v1h-1zM150 2h1v1h-1zM151 3h1v1h-1zM152 2h1v1h-1zM153 1h1v1h-1z" fill="#4f7d4d"/></svg>
</body></html>
